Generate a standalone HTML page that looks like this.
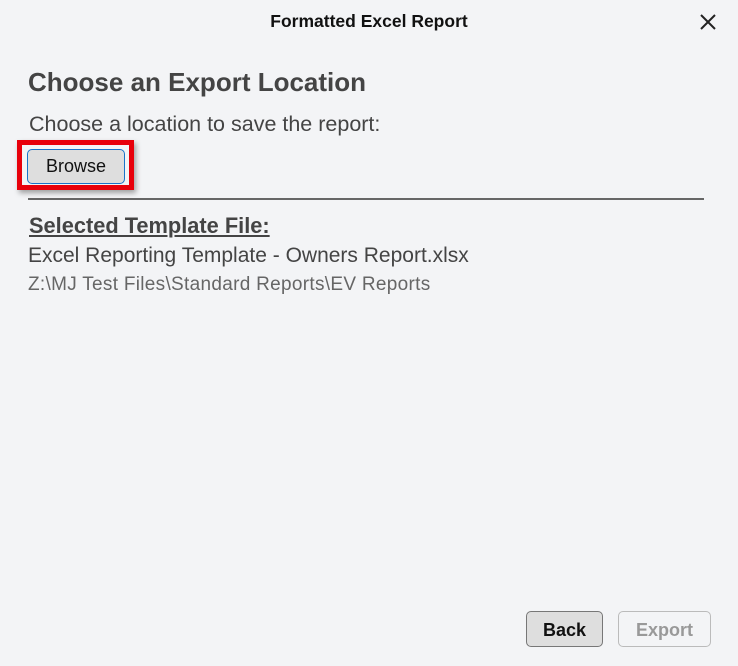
<!DOCTYPE html>
<html><head><style>
body{margin:0;width:738px;height:666px;background:#f3f4f6;font-family:"Liberation Sans",sans-serif;position:relative;overflow:hidden;color:#404040}
div{position:absolute;white-space:nowrap}
</style></head><body>
<div style="left:0;width:738px;top:11px;text-align:center;font-weight:bold;font-size:17.5px;color:#111">Formatted Excel Report</div>
<svg style="position:absolute;left:700px;top:14px" width="16" height="16"><path d="M1 1L15 15M15 1L1 15" stroke="#222" stroke-width="2"/></svg>
<div style="left:28px;top:67px;font-size:26px;font-weight:bold;color:#444">Choose an Export Location</div>
<div style="left:29px;top:112px;font-size:21.5px;color:#444">Choose a location to save the report:</div>
<div style="left:17px;top:140px;width:107px;height:40px;border:5px solid #e8000b;box-shadow:2px 3px 5px rgba(0,0,0,.35)"></div>
<div style="left:27px;top:149px;width:96px;height:33px;border:1px solid #1a73c8;border-radius:5px;background:#dedede;font-size:18px;color:#111;text-align:center;line-height:33px">Browse</div>
<div style="left:28px;top:198px;width:676px;height:2px;background:#666"></div>
<div style="left:29px;top:213px;font-size:21.8px;font-weight:bold;text-decoration:underline;color:#444">Selected Template File:</div>
<div style="left:28px;top:244px;font-size:21px;color:#444">Excel Reporting Template - Owners Report.xlsx</div>
<div style="left:28px;top:274px;font-size:19px;letter-spacing:0.3px;color:#666">Z:\MJ Test Files\Standard Reports\EV Reports</div>
<div style="left:526px;top:611px;width:75px;height:34px;border:1px solid #777;border-radius:5px;background:#dedede;font-size:18px;font-weight:bold;color:#111;text-align:center;line-height:36px">Back</div>
<div style="left:618px;top:611px;width:91px;height:34px;border:1px solid #bbb;border-radius:5px;background:#f3f4f6;font-size:18px;font-weight:bold;color:#999;text-align:center;line-height:36px">Export</div>
</body></html>
